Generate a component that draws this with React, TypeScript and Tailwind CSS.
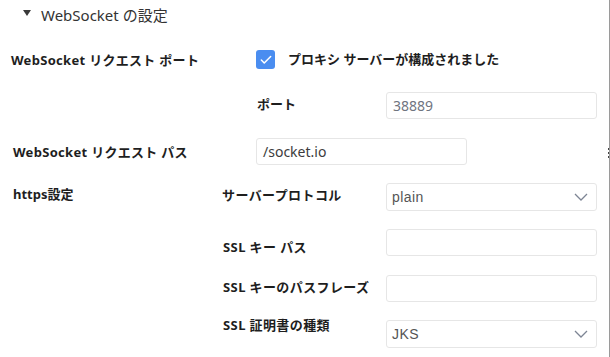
import { Check } from 'lucide-react'

const font = { fontFamily: '"Noto Sans", "Noto Sans CJK JP", sans-serif' }

function TextInput({ value, className = '' }: { value?: string; className?: string }) {
  return (
    <div
      className={`flex h-[27px] w-[211px] items-center rounded-[3px] border border-[#e6e6e6] bg-white px-[6px] text-[14px] font-normal ${className}`}
    >
      {value}
    </div>
  )
}

function SelectBox({ value }: { value: string }) {
  return (
    <div className="flex h-[28px] w-[211px] items-center justify-between rounded-[3px] border border-[#e6e6e6] bg-white pl-[5px] pr-[8px]">
      <span
        className="text-[14px] font-normal text-[#555]"
        style={{ fontFamily: '"Liberation Sans", Arial, sans-serif' }}
      >
        {value}
      </span>
      <svg width="14" height="8" viewBox="0 0 14 8" fill="none">
        <polyline points="1,1 7,7 13,1" stroke="#7d8594" strokeWidth="1.3" />
      </svg>
    </div>
  )
}

export default function App() {
  return (
    <div
      className="relative h-[357px] w-[610px] overflow-hidden border-r border-[#9a9a9a] bg-white text-[#1e1e1e]"
      style={font}
    >
      {/* section header */}
      <div className="flex h-[30px] items-center pl-[23px] text-[15px] text-[#333]">
        <svg width="8" height="6" viewBox="0 0 8 6" className="-mt-[4px]">
          <polygon points="0,0 8,0 4,6" fill="#3a3a3a" />
        </svg>
        <span className="ml-[10px]">WebSocket の設定</span>
      </div>

      {/* request port */}
      <div className="mt-[20px] flex">
        <div className="flex h-[19px] w-[256px] items-center pl-[11px] text-[13px] font-bold leading-[18px] tracking-[0.3px]">
          WebSocket リクエスト ポート
        </div>
        <div className="flex flex-col">
          <div className="flex h-[19px] items-center">
            <div className="flex h-[19px] w-[19px] items-center justify-center rounded-[3px] bg-[#4a8df0]">
              <Check size={14} strokeWidth={2.6} color="#fff" />
            </div>
            <span className="ml-[13px] text-[13px] font-bold">プロキシ サーバーが構成されました</span>
          </div>
          <div className="mt-[23px] flex items-center">
            <span className="-mt-[4px] w-[130px] pl-[1px] text-[13px] font-bold leading-[18px]">ポート</span>
            <TextInput value="38889" className="text-[#6f7480]" />
          </div>
        </div>
      </div>

      {/* request path */}
      <div className="mt-[19px] flex items-center">
        <div className="w-[256px] pl-[13px] text-[13px] font-bold leading-[18px] tracking-[0.3px]">
          WebSocket リクエスト パス
        </div>
        <TextInput value="/socket.io" className="text-[#3c3c3c]" />
      </div>

      {/* https */}
      <div className="mt-[18px] flex">
        <div className="w-[222px] pl-[13px] pt-[2px] text-[13px] font-bold leading-[18px]">https設定</div>
        <div className="flex flex-col text-[13px] font-bold leading-[18px] tracking-[0.4px]">
          <div className="flex items-start">
            <span className="w-[164px] pt-[3px]">サーバープロトコル</span>
            <SelectBox value="plain" />
          </div>
          <div className="mt-[18px] flex items-start">
            <span className="w-[164px] pl-[1px] pt-[9px]">SSL キー パス</span>
            <TextInput />
          </div>
          <div className="mt-[19px] flex items-start">
            <span className="w-[164px] pl-[1px] pt-[3px]">SSL キーのパスフレーズ</span>
            <TextInput />
          </div>
          <div className="mt-[14px] flex items-start">
            <span className="w-[164px] pl-[1px]">SSL 証明書の種類</span>
            <div className="mt-[4px]">
              <SelectBox value="JKS" />
            </div>
          </div>
        </div>
      </div>

      {/* splitter grip */}
      <div className="absolute right-[-1px] top-[148px] flex flex-col gap-[2px]">
        <div className="h-[2px] w-[2px] bg-[#444]" />
        <div className="h-[2px] w-[2px] bg-[#444]" />
        <div className="h-[2px] w-[2px] bg-[#444]" />
      </div>
    </div>
  )
}
